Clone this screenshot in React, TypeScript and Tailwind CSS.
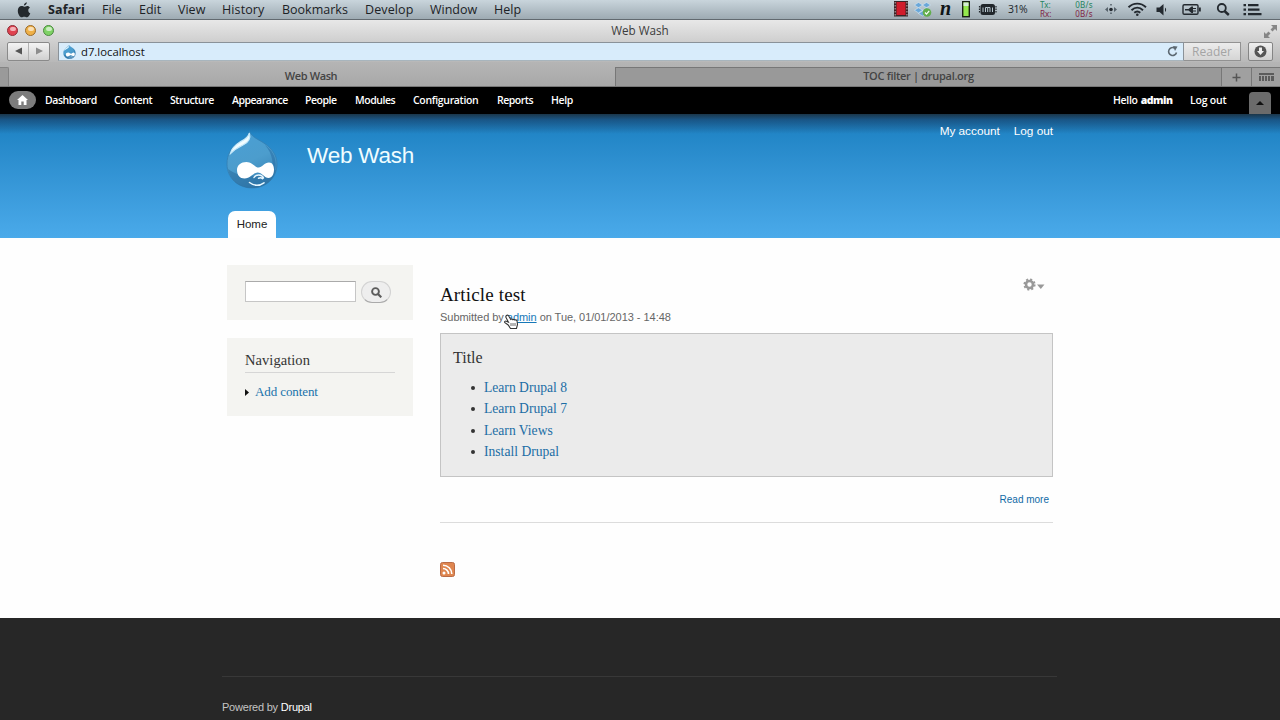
import type { ReactNode } from "react";

const menus = [
  { label: "Safari", cls: "w-[54px] font-bold tracking-[0.1px]" },
  { label: "File", cls: "w-[37px]" },
  { label: "Edit", cls: "w-[39px]" },
  { label: "View", cls: "w-[44px]" },
  { label: "History", cls: "w-[60px] tracking-[0.1px]" },
  { label: "Bookmarks", cls: "w-[83px]" },
  { label: "Develop", cls: "w-[65px] tracking-[0.1px]" },
  { label: "Window", cls: "w-[64px]" },
  { label: "Help", cls: "w-[40px]" },
];

const adminLinks = [
  { label: "Dashboard", cls: "w-[69px] tracking-[-0.43px]" },
  { label: "Content", cls: "w-[56px] tracking-[-0.35px]" },
  { label: "Structure", cls: "w-[62px] tracking-[-0.43px]" },
  { label: "Appearance", cls: "w-[73px] tracking-[-0.5px]" },
  { label: "People", cls: "w-[50px] tracking-[-0.5px]" },
  { label: "Modules", cls: "w-[58px] tracking-[-0.45px]" },
  { label: "Configuration", cls: "w-[84px] tracking-[-0.33px]" },
  { label: "Reports", cls: "w-[54px] tracking-[-0.5px]" },
  { label: "Help", cls: "w-[30px] tracking-[-0.35px]" },
];

const tocLinks = ["Learn Drupal 8", "Learn Drupal 7", "Learn Views", "Install Drupal"];

function AppleLogo() {
  return (
    <svg className="h-[16px] w-[14px]" viewBox="0 0 14 16" fill="#24292d">
      <path d="M9.8.3c.1 1.6-1.300 3.300-2.900 3.300C6.700 2 8.200.5 9.800.3zM12.900 5.700c-1 .6-1.600 1.500-1.600 2.700 0 1.400.8 2.400 2 2.900-.7 2-2 4-3.400 4-1 0-1.400-.6-2.600-.6-1.200 0-1.700.6-2.600.6C2.900 15.300.8 12 .8 8.700.8 5.800 2.600 4 4.600 4c1.100 0 2 .7 2.700.7.600 0 1.700-.8 3-.8 1.100 0 2 .6 2.600 1.800z" />
    </svg>
  );
}

function Druplicon({ className }: { className: string }) {
  return (
    <svg className={className} viewBox="0 0 52 58">
      <defs>
        <linearGradient id="drop" x1="0.3" y1="0" x2="0.7" y2="1">
          <stop offset="0" stopColor="#4a9fd4" />
          <stop offset="0.5" stopColor="#4c9dcd" />
          <stop offset="1" stopColor="#3580b4" />
        </linearGradient>
      </defs>
      <path d="M23.500.5c2.500 5.500 8 7.500 13.500 11C46 17 51 24.500 51 33 51 47.500 39.500 57 26 57S1 47.500 1 33C1 23.500 5 17 11.500 12 17 8.500 22.500 6 23.500.5z" fill="url(#drop)" stroke="#347fb2" strokeWidth=".8" />
      <path d="M39 14c7 5 10.500 11 10.500 19 0 5-1.500 9-4 12.500C48 34 47 23 39 14z" fill="#2468a0" opacity=".5" />
      <path d="M23.300 2c1.800 6-1 9.500-6.300 12-5 2.500-8.500 4.500-12.500 8.500C5.500 17 10 13.500 14 11 18.500 8.500 22.500 6.500 23.300 2z" fill="#f2fdff" stroke="#c4e8fa" strokeWidth="1.200" />
      <path d="M2 38c8 6 18 8 28 7 8-1 14-4 20-6C47 51 37 57 26 57 13 57 4 49 2 38z" fill="#26689a" opacity=".5" />
      <path d="M11 39c0-5 4-8 9.500-8 5.500 0 9 5.500 12 5.500 3.500 0 6-5 10.500-5 3.500 0 5 3.500 5 7 0 4.500-2 8.500-5.500 8.500-4 0-6.500-5.500-11-5.500-4 0-7 6-13 6-4.500 0-7.500-3.500-7.500-8.500z" fill="#fff" />
      <path d="M28 46.500c2-3.500 8-3.500 9.500.5M32.500 47.300c1.500-.7 3-.5 4 .5M23.500 51.500c4.500 3.500 10 3.500 14.500.3" stroke="#e8f7ff" strokeWidth="1.500" fill="none" strokeLinecap="round" />
    </svg>
  );
}

function StatusIcons() {
  return (
    <div className="flex h-[19px] w-[388px] items-center">
      <svg className="h-[19px] w-[48px] shrink-0" viewBox="0 0 48 19">
        <rect x="2" y="1" width="14" height="15.500" fill="#3a2427" />
        <rect x="4.500" y="2" width="9" height="13" fill="#d01c2c" />
        <path d="M3.200 2v14M14.900 2v14" stroke="#aa9b9f" strokeWidth="1.200" strokeDasharray="1.500 1.500" />
        <g fill="#6aa7d8" stroke="#e3f1fb" strokeWidth=".5" transform="translate(-1.500 0)">
          <path d="M28 2.500l4 2.500-4 2.700-4-2.700zM36 2.500l4 2.500-4 2.700-4-2.700zM28 7.700l4 2.600-4 2.600-4-2.600zM36 7.700l4 2.600-4 2.600-4-2.600zM32 11l4 2.500-4 2.500-4-2.500z" />
        </g>
        <circle cx="35" cy="12.500" r="4.300" fill="#62ae4e" />
        <path d="M33 12.500l1.500 1.600 2.700-3.200" stroke="#fff" strokeWidth="1.200" fill="none" />
      </svg>
      <span className="flex h-[19px] w-[20px] shrink-0 items-center pb-[3px] font-['Liberation_Serif'] text-[20px] font-bold italic leading-none text-[#101517]">n</span>
      <svg className="h-[19px] w-[40px] shrink-0" viewBox="68 0 40 19">
        <rect x="70.700" y="1.700" width="6.600" height="15" fill="#94e84e" stroke="#182014" strokeWidth="1.400" />
        <rect x="71.500" y="2.500" width="5" height="3.500" fill="#d4ebd5" />
        <rect x="88.500" y="4" width="14.500" height="11" rx="2.500" fill="#20262b" />
        <path d="M87.500 6v7M104 6v7" stroke="#20262b" strokeWidth="1.200" strokeDasharray="1.500 1" />
        <path d="M91 7.500v4.500M93.500 12V7.500h2.200V12M95.700 7.500h2.300V12M100.500 7.500v4.500" stroke="#b8c8d1" strokeWidth="1" fill="none" />
      </svg>
      <span className="w-[32px] shrink-0 pl-[8px] text-[10.5px] tracking-[-0.5px] text-[#20262b]">31%</span>
      <div className="flex w-[68px] shrink-0 justify-between pl-[8px] pr-[7px] font-['Noto_Sans'] text-[8px] leading-[8.500px]">
        <div className="flex flex-col"><span className="text-[#25845e]">Tx:</span><span className="text-[#812344]">Rx:</span></div>
        <div className="flex flex-col tracking-[0.3px]"><span className="text-[#25845e]">0B/s</span><span className="text-[#812344]">0B/s</span></div>
      </div>
      <svg className="h-[19px] w-[174px] shrink-0" viewBox="0 0 174 19" fill="#23292f">
        <g transform="translate(-13.500 0)">
          <circle cx="24.500" cy="9.500" r="1.800" />
          <path d="M24.500 4v2.500M24.500 12.500V15" stroke="#56626b" strokeWidth="1.600" strokeDasharray="1.500 1" />
          <path d="M21.500 7l-3 2.500 3 2.500zM27.500 7l3 2.500-3 2.500z" fill="#56626b" />
          <g fill="none" stroke="#23292f" strokeWidth="1.900">
            <path d="M42 7.200c5-4.800 12.500-4.800 17.500 0M45 10.200c3.500-3.300 8-3.300 11.500 0M47.800 12.800c2-1.800 4-1.800 6 0" />
          </g>
          <circle cx="50.800" cy="14.700" r="1.300" />
          <path d="M70 7.500h3l4-3.500v11.500l-4-3.500h-3zM78.500 7.500c1.500 1 1.500 3.500 0 4.500z" />
          <rect x="96.500" y="4.700" width="15" height="9.600" rx="1.300" fill="none" stroke="#23292f" strokeWidth="1.400" />
          <path d="M112.500 7.500h1.800v4h-1.800zM98.500 9h3.500l3-2.500h1.500V8h3v1h-3v1.500h3v1h-3v1.500H105l-3-2.500h-3.500z" />
          <circle cx="135.300" cy="8" r="4" fill="none" stroke="#23292f" strokeWidth="1.800" />
          <path d="M138 11l4.300 4" stroke="#23292f" strokeWidth="2.400" />
          <path d="M157 4h2.500v2.200H157zM161.500 4H172v2.200h-10.500zM157 8.500h2.500v2.200H157zM161.500 8.500H173v2.200h-11.500zM157 13h2.500v2.200H157zM161.500 13H175v2.200h-13.500z" />
        </g>
      </svg>
    </div>
  );
}

function TrafficLight({ className }: { className: string }) {
  return (
    <span className={`flex size-[11px] justify-center rounded-full border pt-[1px] ${className}`}>
      <span className="h-[4px] w-[6px] rounded-full bg-white/60" />
    </span>
  );
}

function MenuBar() {
  return (
    <div className="flex h-[20px] items-center justify-between border-b border-[#626a70] bg-linear-to-b from-[#c9d5dc] to-[#9eabb3] font-['Open_Sans'] text-[12.5px] text-[#1c2226]">
      <div className="flex items-center pl-[17px] leading-[19px]">
        <span className="w-[31px]"><AppleLogo /></span>
        {menus.map((m) => <span key={m.label} className={`whitespace-nowrap ${m.cls}`}>{m.label}</span>)}
      </div>
      <StatusIcons />
    </div>
  );
}

function BrowserChrome() {
  return (
    <div className="font-['Open_Sans']">
      <div className="bg-linear-to-b from-[#e8e8e8] to-[#b8b8b8]">
        <div className="grid h-[22px] grid-cols-[200px_1fr_200px] items-center">
          <div className="flex gap-[7px] pb-[2px] pl-[7px]">
            <TrafficLight className="border-[#8e3039] bg-[#e0424f]" />
            <TrafficLight className="border-[#9b6b2b] bg-[#efb047]" />
            <TrafficLight className="border-[#4b8a3f] bg-[#7fd266]" />
          </div>
          <div className="text-center text-[11.7px] text-[#3c3c3c]">Web Wash</div>
          <svg className="ml-auto mr-[3px] size-[13px]" viewBox="0 0 13 13" fill="#858585">
            <path d="M7 0h6v6l-2-2-2.500 2.500-2-2L9 2zM6 13H0V7l2 2 2.500-2.500 2 2L4 11z" />
          </svg>
        </div>
        <div className="flex h-[20px] items-start">
          <div className="ml-[7px] mr-[8px] flex h-[19px] w-[43px] shrink-0 rounded-[2px] border border-[#8a8a8a] bg-linear-to-b from-[#f4f4f4] to-[#d0d0d0]">
            <svg className="h-full w-full" viewBox="0 0 41 17">
              <path d="M14 4.500v7L7 8z" fill="#545454" /><path d="M28 4.500v7L35 8z" fill="#8d8d8d" /><path d="M20.500 0v17" stroke="#b2b2b2" />
            </svg>
          </div>
          <div className="flex h-[19px] flex-1 items-center border border-[#8a9299] border-b-[#a8b5bd] bg-[#d8ecfb] pl-[4px] text-[11.3px] text-[#111]">
            <Druplicon className="mr-[5px] h-[14px] w-[13px]" />
            <span className="pt-[1px]">d7.localhost</span>
            <svg className="ml-auto mr-[5px] size-[11px]" viewBox="0 0 11 11" fill="none" stroke="#5c6871" strokeWidth="1.600">
              <path d="M9.500 6.500A4 4 0 1 1 7.500 2" /><path d="M6 0l4.500.5L8 5z" fill="#5c6871" stroke="none" />
            </svg>
          </div>
          <div className="h-[19px] w-[57px] border border-l-0 border-[#929292] bg-linear-to-b from-[#ececec] to-[#d5d5d5] text-center text-[12px] leading-[17px] text-[#a4a4a4]">Reader</div>
          <div className="ml-[7px] mr-[7px] flex h-[19px] w-[25px] items-center justify-center rounded-[2px] border border-[#858585] bg-linear-to-b from-[#efefef] to-[#cfcfcf]">
            <svg className="size-[13px]" viewBox="0 0 13 13"><circle cx="6.500" cy="6.500" r="6" fill="#555" /><path d="M5 2.500h3V6h2L6.500 10 3 6h2z" fill="#eee" /></svg>
          </div>
        </div>
      </div>
      <div className="flex h-[25px] border-b border-[#777] bg-linear-to-b from-[#b5b5b5] to-[#a8a8a8] pt-[5px] text-[11px] font-semibold tracking-[-0.4px] text-[#444]">
        <div className="h-[19px] w-[9px] rounded-tr-[2px] border-r border-t border-[#848484] bg-[#9a9a9a]" />
        <div className="w-[606px] pr-[2px] text-center leading-[18px]">Web Wash</div>
        <div className="w-[607px] border-x border-t border-[#777] bg-[#999] text-center leading-[16px] tracking-[-0.3px]">
          TOC filter | drupal.org
        </div>
        <div className="flex w-[29px] items-center justify-center border-t border-[#777] bg-[#a0a0a0]">
          <svg className="size-[9px]" viewBox="0 0 9 9"><path d="M4.500.5v8M.5 4.500h8" stroke="#555" strokeWidth="1.500" /></svg>
        </div>
        <div className="flex flex-1 items-center justify-center border-l border-t border-[#777] bg-[#a0a0a0]">
          <svg className="h-[9px] w-[15px]" viewBox="0 0 15 9" fill="#5b5b5b"><path d="M0 0h15v2H0zM0 3h2v5H0zM3 3h2v5H3zM6 3h2v5H6zM9 3h2v5H9zM12 3h3v5h-3z" /></svg>
        </div>
      </div>
    </div>
  );
}

function AdminToolbar() {
  return (
    <div className="flex h-[27px] items-center bg-black pb-[1px] font-['Open_Sans'] text-[10.5px] font-semibold leading-[24px] text-white">
      <span className="ml-[9px] mr-[9px] flex h-[18px] w-[27px] items-center justify-center rounded-full bg-[#7c7c7c]">
        <svg className="h-[10px] w-[11px]" viewBox="0 0 11 10" fill="#fff"><path d="M5.500 0L11 5H9.500v5H6.700V6.500H4.300V10H1.500V5H0z" /></svg>
      </span>
      {adminLinks.map((l) => <a key={l.label} className={`whitespace-nowrap ${l.cls}`}>{l.label}</a>)}
      <span className="ml-auto w-[77px] whitespace-nowrap tracking-[-0.3px] [word-spacing:0.6px]">Hello <b className="tracking-[-0.5px]">admin</b></span>
      <span className="w-[59px] tracking-[-0.2px]">Log out</span>
      <span className="-mb-[1px] mr-[9px] flex h-[22px] w-[22px] items-center justify-center self-end rounded-t-[4px] bg-[#6b6b6b]">
        <svg className="h-[4px] w-[8px]" viewBox="0 0 8 4"><path d="M4 0l4 4H0z" fill="#111" /></svg>
      </span>
    </div>
  );
}

function SiteHeader() {
  return (
    <header className="h-[124px] bg-linear-to-b from-[#187fc0] to-[#4aaaea] font-['Liberation_Sans']">
      <div className="h-full bg-[linear-gradient(to_bottom,rgba(27,50,67,0.95)_0px,rgba(24,64,105,0.65)_6px,rgba(20,90,150,0)_20px)]">
        <div className="ml-[226px] flex h-[97px] w-[827px]">
          <Druplicon className="mt-[17px] h-[58px] w-[52px]" />
          <h1 className="ml-[29px] mt-[28px] text-[22.5px] leading-[28px] tracking-[-0.2px] text-[#f0fdff]">Web Wash</h1>
          <nav className="ml-auto flex gap-[14px] pt-[9px] text-[11.8px] leading-[16px] tracking-[-0.02px] text-white">
            <a>My account</a><a>Log out</a>
          </nav>
        </div>
        <div className="ml-[228px] h-[27px] w-[48px] rounded-t-[7px] bg-white text-center text-[11.5px] leading-[27px] text-[#222]">Home</div>
      </div>
    </header>
  );
}

function Block({ className, children }: { className: string; children: ReactNode }) {
  return <section className={`w-[186px] bg-[#f4f4f1] pl-[18px] pr-[18px] ${className}`}>{children}</section>;
}

function Sidebar() {
  return (
    <aside className="ml-[227px] mt-[27px] w-[186px] font-['Liberation_Serif']">
      <Block className="flex h-[55px] items-start pt-[16px]">
        <span className="h-[21px] w-[111px] shrink-0 border border-[#c6c6c6] border-t-[#aaa] bg-white" />
        <span className="ml-[5px] flex h-[22px] w-[30px] shrink-0 items-center justify-center rounded-full border border-[#d2d2d2] border-b-[#aaa] bg-[#eee]">
          <svg className="size-[11px]" viewBox="0 0 11 11" fill="none" stroke="#5c5c5c"><circle cx="4.500" cy="4.500" r="3.400" strokeWidth="1.900" /><path d="M7 7l3.300 3.300" strokeWidth="2.200" /></svg>
        </span>
      </Block>
      <Block className="mt-[18px] h-[78px] pt-[11px]">
        <h2 className="h-[24px] border-b border-[#d6d6d6] text-[14.5px] leading-[22px] tracking-[0.05px] text-[#333]">Navigation</h2>
        <div className="mt-[9px] flex items-center text-[13px] leading-[20px] tracking-[-0.1px] text-[#1872ab]">
          <svg className="mr-[6px] h-[7px] w-[4px]" viewBox="0 0 4 7"><path d="M0 0l4 3.500L0 7z" fill="#111" /></svg>
          <a>Add content</a>
        </div>
      </Block>
    </aside>
  );
}

function HandCursor() {
  return (
    <svg className="absolute left-[64px] top-[6px] h-[16px] w-[15px]" viewBox="0 0 15 16">
      <path d="M2.500 1.500c1-.8 2 0 2.400.8l1.800 3.200c.8-.7 1.700-.6 2.200.2.800-.5 1.600-.3 2 .4 1-.5 2 .1 2.200 1.200l.4 3.200-1 4H6.500L4.200 11 .9 8.700c-.8-1 .3-2.100 1.500-1.500l2 .9L2 3.500c-.4-.8-.1-1.500.5-2z" fill="#fff" stroke="#333" strokeWidth="1.100" />
      <path d="M7 9v3M9 9v3M11 9v3" stroke="#444" strokeWidth=".8" />
    </svg>
  );
}

function Article() {
  return (
    <main className="ml-[27px] w-[613px]">
      <div className="flex h-[70px] justify-between pt-[40px]">
        <h2 className="mt-[5px] font-['Liberation_Serif'] text-[19px] leading-[24px] tracking-[0.15px] text-[#111]">Article test</h2>
        <svg className="mr-[8px] h-[14px] w-[22px]" viewBox="0 0 22 14" fill="#999">
          <circle cx="6.500" cy="6.500" r="3.500" fill="none" stroke="#999" strokeWidth="2.600" />
          <circle cx="6.500" cy="6.500" r="5.200" fill="none" stroke="#999" strokeWidth="1.800" strokeDasharray="2.100 1.984" />
          <path d="M14 6.500h7.500L17.800 11z" />
        </svg>
      </div>
      <p className="relative h-[25px] font-['Liberation_Sans'] text-[11px] leading-[18px] tracking-[-0.035px] text-[#666]">
        Submitted by <a className="text-[#1678b8] underline">admin</a> on Tue, 01/01/2013 - 14:48
        <HandCursor />
      </p>
      <section className="h-[144px] border border-[#c4c4c4] bg-[#ebebeb] pl-[12px] pt-[12px] font-['Liberation_Serif']">
        <h3 className="text-[16px] leading-[23px] text-[#333]">Title</h3>
        <ul className="mt-[8px] text-[13.6px] leading-[21.4px] text-[#1b6da5]">
          {tocLinks.map((t) => (
            <li key={t} className="flex items-center pl-[18px]">
              <span className="mr-[9px] size-[4px] rounded-full bg-[#333]" />
              <a>{t}</a>
            </li>
          ))}
        </ul>
      </section>
      <div className="h-[46px] border-b border-[#dcdcdc] pr-[4px] pt-[14px] text-right font-['Liberation_Sans'] text-[10px] leading-[18px] text-[#106aa6]">Read more</div>
      <svg className="mt-[39px] size-[15px]" viewBox="0 0 15 15">
        <rect x=".5" y=".5" width="14" height="14" rx="2" fill="#df864f" stroke="#b96b46" />
        <circle cx="4" cy="11" r="1.500" fill="#fff" />
        <path d="M3 6.500a5.500 5.500 0 0 1 5.500 5.500M3 3.200A8.800 8.800 0 0 1 11.800 12" stroke="#fff" strokeWidth="1.600" fill="none" />
      </svg>
    </main>
  );
}

export default function App() {
  return (
    <div className="flex h-[720px] w-[1280px] flex-col overflow-hidden bg-[#fefefe]">
      <MenuBar />
      <BrowserChrome />
      <AdminToolbar />
      <SiteHeader />
      <div className="flex h-[380px] shrink-0"><Sidebar /><Article /></div>
      <footer className="h-[102px] shrink-0 bg-[#272727] pl-[222px] pt-[58px] font-['Liberation_Sans'] text-[11px] tracking-[-0.22px] text-[#c4c4c4]">
        <div className="w-[835px] border-t border-[#383838] pt-[21px] leading-[18px]">Powered by <a className="text-white">Drupal</a></div>
      </footer>
    </div>
  );
}
